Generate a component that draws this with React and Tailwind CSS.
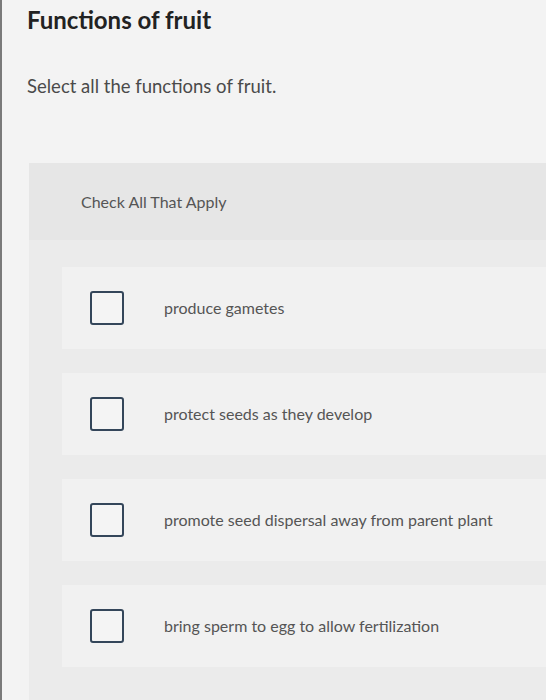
import React from "react";

const options = [
  "produce gametes",
  "protect seeds as they develop",
  "promote seed dispersal away from parent plant",
  "bring sperm to egg to allow fertilization",
];

function Checkbox() {
  return <div className="h-[34px] w-[34px] shrink-0 rounded-[3px] border-2 border-[#34465a] bg-[#f4f4f4]" />;
}

export default function App() {
  return (
    <div className="h-[700px] w-[546px] overflow-hidden border-l-2 border-[#7a7a7a] bg-[#f3f3f3] font-['Lato','Open_Sans',sans-serif]">
      <div className="px-[25px] pt-[5px]">
        <h1 className="text-[24px] font-bold leading-[30px] text-[#222]">Functions of fruit</h1>
        <p className="mt-[38px] text-[18.5px] leading-[26px] text-[#4a4a4a]">Select all the functions of fruit.</p>
      </div>

      <div className="ml-[27px] mt-[64px] bg-[#ebebeb] pb-[40px]">
        <div className="flex h-[77px] items-center bg-[#e6e6e6] pl-[52px] text-[16px] text-[#555]">
          Check All That Apply
        </div>
        <div className="flex flex-col gap-[24px] pl-[33px] pt-[27px]">
          {options.map((o) => (
            <div key={o} className="flex h-[82px] items-center bg-[#f1f1f1] pl-[28px]">
              <Checkbox />
              <span className="ml-[40px] text-[16px] text-[#555]">{o}</span>
            </div>
          ))}
        </div>
      </div>
    </div>
  );
}
